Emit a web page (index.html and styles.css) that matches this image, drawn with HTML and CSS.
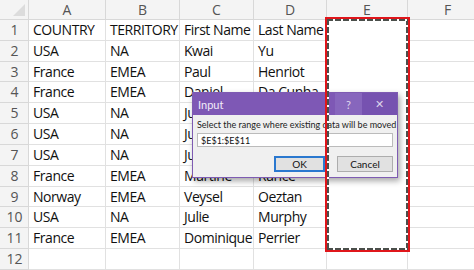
FILE: index.html
```html
<!DOCTYPE html>
<html lang="en">
<head>
    <meta charset="UTF-8">
    <title>Input - move range</title>
    <link rel="stylesheet" href="styles.css">
</head>
<body>
    <div class="sheet">
        <div class="grid">
            <div class="corner"><span class="tri"></span></div>
            <div class="colhead">A</div>
            <div class="colhead">B</div>
            <div class="colhead">C</div>
            <div class="colhead">D</div>
            <div class="colhead">E</div>
            <div class="colhead">F</div>

            <div class="rowhead">1</div><div class="cell">COUNTRY</div><div class="cell">TERRITORY</div><div class="cell">First Name</div><div class="cell">Last Name</div><div class="cell sel"></div><div class="cell"></div>
            <div class="rowhead">2</div><div class="cell">USA</div><div class="cell">NA</div><div class="cell">Kwai</div><div class="cell">Yu</div><div class="cell sel"></div><div class="cell"></div>
            <div class="rowhead">3</div><div class="cell">France</div><div class="cell">EMEA</div><div class="cell">Paul</div><div class="cell">Henriot</div><div class="cell sel"></div><div class="cell"></div>
            <div class="rowhead">4</div><div class="cell">France</div><div class="cell">EMEA</div><div class="cell">Daniel</div><div class="cell">Da Cunha</div><div class="cell sel"></div><div class="cell"></div>
            <div class="rowhead">5</div><div class="cell">USA</div><div class="cell">NA</div><div class="cell">Julie</div><div class="cell">Brown</div><div class="cell sel"></div><div class="cell"></div>
            <div class="rowhead">6</div><div class="cell">USA</div><div class="cell">NA</div><div class="cell">Julie</div><div class="cell">Young</div><div class="cell sel"></div><div class="cell"></div>
            <div class="rowhead">7</div><div class="cell">USA</div><div class="cell">NA</div><div class="cell">Julie</div><div class="cell">King</div><div class="cell sel"></div><div class="cell"></div>
            <div class="rowhead">8</div><div class="cell">France</div><div class="cell">EMEA</div><div class="cell">Martine</div><div class="cell">Rance</div><div class="cell sel"></div><div class="cell"></div>
            <div class="rowhead">9</div><div class="cell">Norway</div><div class="cell">EMEA</div><div class="cell">Veysel</div><div class="cell">Oeztan</div><div class="cell sel"></div><div class="cell"></div>
            <div class="rowhead">10</div><div class="cell">USA</div><div class="cell">NA</div><div class="cell">Julie</div><div class="cell">Murphy</div><div class="cell sel"></div><div class="cell"></div>
            <div class="rowhead">11</div><div class="cell">France</div><div class="cell">EMEA</div><div class="cell">Dominique</div><div class="cell">Perrier</div><div class="cell sel"></div><div class="cell"></div>
            <div class="rowhead">12</div><div class="cell"></div><div class="cell"></div><div class="cell"></div><div class="cell"></div><div class="cell"></div><div class="cell"></div>
        </div>

        <div class="dialog">
            <div class="titlebar">
                <span class="title">Input</span>
                <span class="tbtn help">?</span>
                <span class="tbtn close">&#x2715;</span>
            </div>
            <div class="body">
                <label for="range">Select the range where existing data will be moved</label>
                <input id="range" type="text" value="$E$1:$E$11">
                <div class="buttons">
                    <button class="ok">OK</button>
                    <button>Cancel</button>
                </div>
            </div>
        </div>

        <div class="marquee"><span class="ants"></span></div>
    </div>
</body>
</html>
```

FILE: styles.css
```css
* {
    box-sizing: border-box;
    margin: 0;
    padding: 0;
}

body {
    background-color: #fff;
    overflow: hidden;
    font-family: "Open Sans", sans-serif;
}

.sheet {
    position: relative;
    width: 474px;
    height: 270px;
    overflow: hidden;
}

.grid {
    display: grid;
    grid-template-columns: 29px 77px 74px 74px 73px 81px 80px;
    grid-template-rows: 20px;
    grid-auto-rows: 20.83px;
    font-size: 14px;
}

.corner,
.colhead,
.rowhead {
    background-color: #f4f4f4;
    color: #555;
    border-right: 1px solid #d8d8d8;
    border-bottom: 1px solid #d8d8d8;
}

.corner {
    position: relative;
}

.tri {
    position: absolute;
    right: 3px;
    bottom: 3px;
    width: 12px;
    height: 12px;
    background-color: #dcdcdc;
    clip-path: polygon(100% 0, 100% 100%, 0 100%);
}

.colhead {
    display: flex;
    align-items: center;
    justify-content: center;
    line-height: 1;
}

.rowhead {
    display: flex;
    align-items: center;
    justify-content: center;
    line-height: 1;
    padding-left: 1px;
}

.cell {
    border-right: 1px solid #e1e1e1;
    border-bottom: 1px solid #e1e1e1;
    color: #111;
    padding-left: 4px;
    display: flex;
    align-items: center;
    white-space: nowrap;
    letter-spacing: -0.45px;
    line-height: 1;
}

.cell.sel {
    border-bottom-color: #fff;
}

/* red highlight round column E */
.marquee {
    position: absolute;
    left: 325px;
    top: 17px;
    width: 85px;
    height: 235px;
    border: 2px solid #e0161b;
}

/* marching ants, drawn inside the red box */
.ants {
    display: block;
    width: 100%;
    height: 100%;
    background-image:
        repeating-linear-gradient(to right, #4b4f4b 0 6px, #fff 6px 8px),
        repeating-linear-gradient(to right, #4b4f4b 0 6px, #fff 6px 8px),
        repeating-linear-gradient(to bottom, #4b4f4b 0 6px, #fff 6px 8px),
        repeating-linear-gradient(to bottom, #4b4f4b 0 6px, #fff 6px 8px);
    background-size: 100% 2px, 100% 2px, 2px 100%, 2px 100%;
    background-position: top left, bottom left, top left, top right;
    background-repeat: no-repeat;
}

.dialog {
    position: absolute;
    left: 192px;
    top: 92px;
    width: 206px;
    height: 86px;
    background-color: #f0f0f0;
    border: 1px solid #7e5bb2;
    box-shadow: 2px 3px 6px rgba(0, 0, 0, 0.35);
    font-family: Lato, sans-serif;
}

.titlebar {
    display: flex;
    align-items: stretch;
    height: 22px;
    background-color: #7e58b5;
}

.title {
    flex: 1;
    display: flex;
    align-items: center;
    padding-left: 5px;
    font-size: 11px;
    color: #f2ecfa;
}

.tbtn {
    display: flex;
    align-items: center;
    justify-content: center;
    color: rgba(255, 255, 255, 0.75);
    font-size: 11px;
}

.help {
    width: 27px;
    background-color: #8766bd;
}

.close {
    width: 35px;
    background-color: #7652b0;
}

.body {
    display: flex;
    flex-direction: column;
    padding: 4px 4px 0 4px;
}

.body label {
    color: #222;
    font-size: 9px;
    white-space: nowrap;
}

.body input {
    height: 14px;
    margin-top: 3px;
    border: 1px solid #bbb;
    background-color: #fff;
    font-family: inherit;
    font-size: 9px;
    padding-left: 3px;
    color: #111;
}

.buttons {
    display: flex;
    justify-content: flex-end;
    gap: 12px;
    margin-top: 9px;
}

.buttons button {
    width: 56px;
    height: 16px;
    font-family: inherit;
    font-size: 10px;
    background-color: #e1e1e1;
    border: 1px solid #adadad;
    color: #111;
}

.buttons .ok {
    width: 51px;
    border: 2px solid #2a78cf;
}
```
